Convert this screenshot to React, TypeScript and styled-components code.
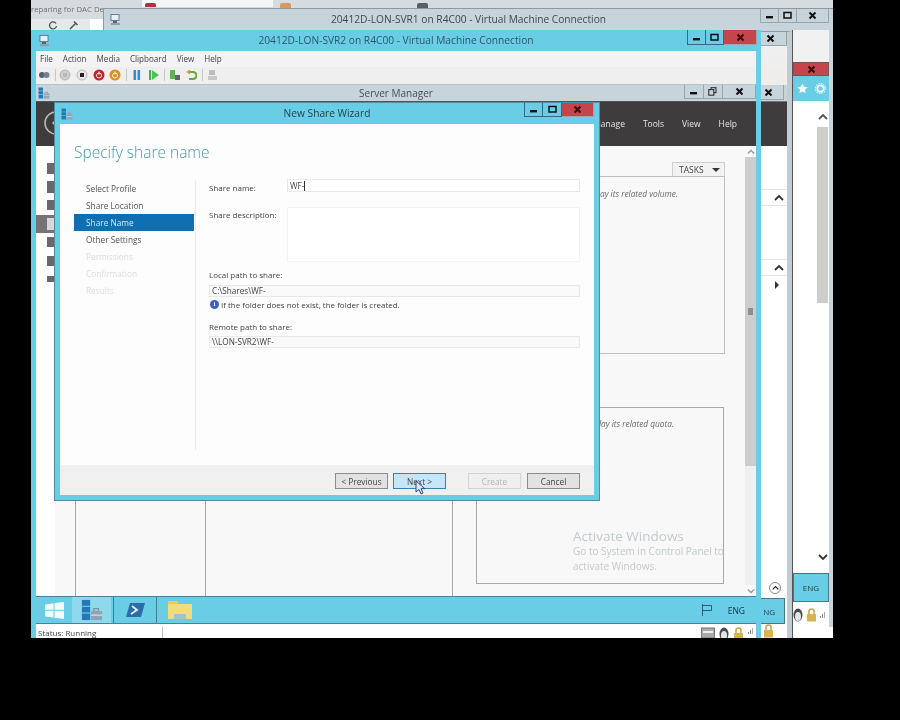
import React from 'react';
import styled, {createGlobalStyle} from 'styled-components';

const TEAL = '#69cde6';
const GREY = '#c8d4db';
const DARK = '#3e3c3c';
const UI_FONT = '"Open Sans", "Noto Sans", sans-serif';

const GlobalStyle = createGlobalStyle`
  html, body {
    margin: 0;
    background: #000;
  }
  body {
    font-family: ${UI_FONT};
    color: #333;
  }
`;

const Desktop = styled.div`
  position: relative;
  width: 900px;
  height: 720px;
  overflow: hidden;
  background: #000;
  filter: blur(0.35px);
`;

const Win = styled.div<{$x: number; $y: number; $w: number; $h: number}>`
  position: absolute;
  left: ${p => p.$x}px;
  top: ${p => p.$y}px;
  width: ${p => p.$w}px;
  height: ${p => p.$h}px;
  box-sizing: border-box;
  display: flex;
  flex-direction: column;
  overflow: hidden;
`;

/* browser behind everything */
const TabStrip = styled.div`
  display: flex;
  height: 19px;
  background: #d6dbdf;
  font-size: 7.8px;
`;
const Tab = styled.div<{$w: number; $active?: boolean; $pad?: number}>`
  width: ${p => p.$w}px;
  height: ${p => (p.$active ? 7 : 19)}px;
  overflow: hidden;
  white-space: nowrap;
  display: flex;
  align-items: flex-start;
  gap: 4px;
  padding-left: ${p => p.$pad ?? 0}px;
  box-sizing: border-box;
  background: ${p => (p.$active ? '#f4f5f6' : 'transparent')};
  color: #6c7276;
`;
const TabText = styled.span`
  line-height: 18px;
`;
const Favicon = styled.i<{$c: string}>`
  width: 11px;
  height: 7px;
  margin-top: 3px;
  flex: none;
  background: ${p => p.$c};
  border-radius: 2px;
`;
const BrowserBar = styled.div`
  display: flex;
  align-items: center;
  gap: 11px;
  height: 11px;
  padding-left: 17px;
  background: #e6e8ea;
  color: #555;
`;
const AddressBox = styled.div`
  width: 60px;
  height: 11px;
  background: #fff;
`;

/* title bars */
const TitleBar = styled.div<{$bg: string; $h: number; $pb?: number}>`
  position: relative;
  flex: none;
  height: ${p => p.$h}px;
  box-sizing: border-box;
  padding-bottom: ${p => p.$pb ?? 0}px;
  background: ${p => p.$bg};
  display: flex;
  align-items: center;
  justify-content: center;
`;
const TitleIcon = styled.span<{$left: number}>`
  position: absolute;
  left: ${p => p.$left}px;
  top: 50%;
  transform: translateY(-50%);
  display: flex;
`;
const TitleText = styled.span<{$c?: string; $size?: number}>`
  font-size: ${p => p.$size ?? 10.2}px;
  color: ${p => p.$c ?? '#3c4a52'};
  white-space: nowrap;
`;
const Caption = styled.div<{$right?: number}>`
  position: absolute;
  right: ${p => p.$right ?? 0}px;
  top: 0;
  display: flex;
`;
const CapBtn = styled.div<{$w: number; $h: number; $red?: boolean; $lit?: boolean}>`
  width: ${p => p.$w}px;
  height: ${p => p.$h}px;
  box-sizing: border-box;
  display: flex;
  align-items: center;
  justify-content: center;
  background: ${p => (p.$red ? '#c4454c' : p.$lit ? '#69cde6' : '#c8d4db')};
  border: 1px solid ${p => (p.$lit ? '#2f6c80' : '#99a4ab')};
  border-left-width: 0;
  border-top-width: 0;
  &:first-child {
    border-left-width: 1px;
  }
`;

const MinGlyph = () => <svg width="9" height="9" viewBox="0 0 9 9"><rect x="1" y="5" width="7" height="2.4" fill="#111"/></svg>;
const MaxGlyph = () => <svg width="9" height="9" viewBox="0 0 9 9"><rect x="1" y="1.5" width="7" height="5.5" fill="none" stroke="#111" strokeWidth="1.5"/></svg>;
const RestoreGlyph = () => (
    <svg width="9" height="9" viewBox="0 0 9 9">
        <rect x="3" y="0.7" width="5" height="5" fill="none" stroke="#222" strokeWidth="1"/>
        <rect x="0.8" y="2.6" width="5" height="5.6" fill={GREY} stroke="#222" strokeWidth="1"/>
    </svg>
);
const CloseGlyph = ({c = '#111'}: {c?: string}) => (
    <svg width="9" height="9" viewBox="0 0 9 9"><path d="M1.5 1.5 7.5 7.5M7.5 1.5 1.5 7.5" stroke={c} strokeWidth="2"/></svg>
);

const CaptionButtons = ({h, wMin, wClose, right, restore}: {h: number; wMin: number; wClose: number; right?: number; restore?: boolean}) => (
    <Caption $right={right}>
        <CapBtn $w={wMin} $h={h}><MinGlyph/></CapBtn>
        <CapBtn $w={wMin} $h={h}>{restore ? <RestoreGlyph/> : <MaxGlyph/>}</CapBtn>
        <CapBtn $w={wClose} $h={h}><CloseGlyph/></CapBtn>
    </Caption>
);

const VmIcon = () => (
    <svg width="11" height="12" viewBox="0 0 11 12">
        <rect x="1" y="0.5" width="8" height="6" fill="#e8eef2" stroke="#4a6a8a" strokeWidth="0.8"/>
        <rect x="3" y="7" width="4" height="2" fill="#567"/>
        <rect x="1" y="9" width="9" height="2" fill="#8ca0b0"/>
    </svg>
);
const ManagerIcon = ({size = 12}: {size?: number}) => (
    <svg width={size} height={size} viewBox="0 0 12 12">
        <rect x="0.5" y="0.5" width="4.5" height="3.2" fill="#2678b8"/>
        <rect x="0.5" y="4.2" width="4.5" height="3.2" fill="#2678b8"/>
        <rect x="0.5" y="7.9" width="4.5" height="3.6" fill="#2678b8"/>
        <path d="M7 6.5V5.2h2.500v1.300" fill="none" stroke="#7c8fa2" strokeWidth="0.7"/>
        <rect x="5.5" y="6.5" width="6" height="5" fill="#8fa3b5"/>
        <rect x="5.5" y="8.5" width="6" height="0.6" fill="#dde7ee"/>
    </svg>
);

/* far right VM window sliver */
const FarWindow = styled(Win)`
  background: linear-gradient(${GREY} 619px, #fff 619px);
`;
const FarTitle = styled(TitleBar)`
  border-top: 1px solid #8e989e;
  border-left: 1px solid #8e989e;
`;
const RightColumn = styled.div`
  flex: 1;
  margin-left: 689px;
  width: 36px;
  display: flex;
  flex-direction: column;
  background: #fff;
  border-left: 1px solid #555;
`;
const SliverTop = styled.div`
  height: 32px;
  background: #f2f1f1;
`;
const RedClose = styled.div`
  height: 14px;
  background: #c4454c;
  border: 1px solid #7a5458;
  box-sizing: border-box;
  display: flex;
  align-items: center;
  justify-content: center;
`;
const StarBand = styled.div`
  height: 25px;
  background: ${TEAL};
  display: flex;
  align-items: center;
  justify-content: center;
  gap: 7px;
`;
const SliverBody = styled.div`
  flex: 1;
  display: flex;
  flex-direction: column;
  align-items: flex-end;
  padding: 11px 1px 0 0;
`;
const ChevronBox = styled.div`
  width: 11px;
  height: 10px;
  display: flex;
  align-items: center;
  justify-content: center;
`;
const SliverTrack = styled.div`
  width: 11px;
  height: 176px;
  margin: 5px 0 249px;
  background: #cdcdca;
`;
const EngBox = styled.div`
  align-self: stretch;
  margin: 11px -1px 0 0;
  height: 29px;
  background: ${TEAL};
  border: 1px solid #46788a;
  box-sizing: border-box;
  font-size: 8px;
  display: flex;
  align-items: center;
  justify-content: center;
  color: #1b3c47;
`;
const TrayRow = styled.div`
  display: flex;
  align-items: center;
  gap: 3px;
  height: 25px;
  align-self: stretch;
`;

const Chevron = ({down, c = '#333', w = 10}: {down?: boolean; c?: string; w?: number}) => (
    <svg width={w} height="6" viewBox="0 0 10 6">
        <path d={down ? 'M1 1l4 4 4-4' : 'M1 5l4-4 4 4'} fill="none" stroke={c} strokeWidth="1.8"/>
    </svg>
);
const UserGlyph = () => (
    <svg width="10" height="14" viewBox="0 0 10 14">
        <ellipse cx="5" cy="7" rx="4.5" ry="6.5" fill="#4a4a50"/>
        <ellipse cx="5" cy="8.5" rx="3" ry="4.5" fill="#e6e6ea"/>
    </svg>
);
const LockGlyph = () => (
    <svg width="11" height="14" viewBox="0 0 11 14">
        <path d="M3 6V3.500a2.500 2.500 0 0 1 5 0V6" fill="none" stroke="#c9a646" strokeWidth="1.6"/>
        <rect x="1" y="6" width="9" height="7.5" fill="#d9b44e"/>
    </svg>
);
const SignalGlyph = () => (
    <svg width="5" height="7" viewBox="0 0 5 7">
        <rect x="0" y="5" width="1" height="2" fill="#888"/>
        <rect x="2" y="3" width="1" height="4" fill="#888"/>
        <rect x="4" y="1" width="1" height="6" fill="#aaa"/>
    </svg>
);

/* middle inactive VM window */
const BackVm = styled.div`
  flex: 1;
  display: flex;
  flex-direction: column;
  background: #fff;
  border-right: 5px solid #c2ccd3;
  border-top: 1px solid #8e989e;
`;
const BackVmTop = styled.div`
  height: 39px;
  flex: none;
  background: linear-gradient(#eff0f1, #f0ecea);
`;
const BackManagerBar = styled.div`
  position: relative;
  flex: none;
  height: 16px;
  background: ${GREY};
  border-bottom: 1px solid #6d757a;
`;
const BackDark = styled.div`
  flex: none;
  height: 44px;
  background: ${DARK};
`;
const BackBody = styled.div`
  flex: 1;
  display: flex;
  flex-direction: column;
  background: #fff;
  padding-top: 43px;
`;
const FoldRow = styled.div<{$gap: number; $pr?: number; $bare?: boolean}>`
  height: 17px;
  box-sizing: border-box;
  display: flex;
  justify-content: flex-end;
  align-items: center;
  padding-right: ${p => p.$pr ?? 3}px;
  border-top: 1px solid ${p => (p.$bare ? 'transparent' : '#e4e4e4')};
  border-bottom: 1px solid ${p => (p.$bare ? 'transparent' : '#e4e4e4')};
  margin-bottom: ${p => p.$gap}px;
`;
const BackEng = styled.div`
  flex: none;
  height: 26px;
  margin-right: 2px;
  background: ${TEAL};
  border: 1px solid #46788a;
  border-left-color: ${TEAL};
  box-sizing: border-box;
  font-size: 8px;
  display: flex;
  align-items: center;
  justify-content: flex-end;
  padding-right: 9px;
  color: #1b3c47;
  overflow: hidden;
`;
const BackStatus = styled.div`
  flex: none;
  height: 14px;
  display: flex;
  justify-content: flex-end;
  padding-right: 13px;
  overflow: hidden;
`;
const RoundUp = styled.div`
  align-self: flex-end;
  margin: auto 6px 4px 0;
  width: 12px;
  height: 12px;
  border-radius: 50%;
  border: 1px solid #888;
  box-sizing: border-box;
  display: flex;
  align-items: center;
  justify-content: center;
`;

/* front VM window */
const VmFrame = styled.div`
  flex: 1;
  display: flex;
  flex-direction: column;
  min-height: 0;
  background: ${TEAL};
  padding: 0 5px;
`;
const VmTitleWrap = styled.div`
  margin: 0 -5px;
`;
const MenuBar = styled.div`
  flex: none;
  height: 16px;
  box-sizing: border-box;
  padding: 0 0 2px 4px;
  background: #f4f3f4;
  display: flex;
  align-items: center;
  gap: 10px;
  font-size: 8.1px;
  color: #444;
`;
const ToolBar = styled.div`
  flex: none;
  height: 17px;
  box-sizing: border-box;
  padding: 0 0 2px 2px;
  background: #f0eff0;
  display: flex;
  align-items: center;
`;
const ToolIcon = styled.span<{$gap?: number}>`
  display: flex;
  margin-left: ${p => p.$gap ?? 4}px;
`;
const ToolSep = styled.i`
  width: 1px;
  height: 12px;
  margin-left: 5px;
  background: #c8c8c8;
`;
const ManagerWindow = styled.div`
  flex: 1;
  min-height: 0;
  display: flex;
  flex-direction: column;
`;
const ManagerBar = styled(TitleBar)`
  border-top: 1px solid #b8c3ca;
  border-bottom: 1px solid #4f5558;
`;
const DarkBand = styled.div`
  flex: none;
  height: 44px;
  box-sizing: border-box;
  padding: 0 19px 2px 0;
  background: ${DARK};
  display: flex;
  align-items: center;
  justify-content: flex-end;
  gap: 18px;
  font-size: 8.5px;
  color: #e6e6e6;
`;
const BackCircle = styled.div`
  position: absolute;
  left: 8px;
  top: 9px;
`;
const DarkWrap = styled.div`
  position: relative;
  flex: none;
`;
const ManagerBody = styled.div`
  flex: 1;
  min-height: 0;
  display: flex;
  background: #f8f8f8;
`;
const Sidebar = styled.div`
  width: 19px;
  flex: none;
  background: #fff;
  padding-top: 13px;
  box-sizing: border-box;
`;
const SideRow = styled.div<{$on?: boolean}>`
  height: 18.5px;
  display: flex;
  align-items: center;
  padding-left: 11px;
  background: ${p => (p.$on ? '#757575' : 'transparent')};
`;
const SideGlyph = styled.i<{$on?: boolean; $h: number}>`
  width: 8px;
  height: ${p => p.$h}px;
  background: ${p => (p.$on ? '#d8d8d8' : '#6a686b')};
`;
const MainPane = styled.div`
  position: relative;
  flex: 1;
  min-width: 0;
  display: flex;
`;
const MainContent = styled.div`
  flex: 1;
  padding: 16px 20px 0 20px;
  display: flex;
  flex-direction: column;
  min-width: 0;
`;
const TasksButton = styled.div`
  align-self: flex-end;
  width: 53px;
  height: 14px;
  flex: none;
  box-sizing: border-box;
  border: 1px solid #cfcfcf;
  border-bottom: 0;
  background: #f2f2f2;
  display: flex;
  align-items: center;
  justify-content: space-between;
  padding: 0 4px 0 6px;
  font-size: 8.5px;
  color: #444;
`;
const TasksCaret = styled.i`
  width: 0;
  height: 0;
  border-left: 4px solid transparent;
  border-right: 4px solid transparent;
  border-top: 4px solid #333;
`;
const TopCard = styled.div`
  flex: none;
  height: 178px;
  border: 1px solid #bdbdbd;
  box-sizing: border-box;
  display: flex;
  justify-content: flex-end;
  padding: 11px 46px 0 0;
`;
const HintText = styled.span`
  font-size: 8.3px;
  font-style: italic;
  color: #6a6a6a;
`;
const BottomRow = styled.div`
  flex: 1;
  margin-top: 53px;
  min-height: 0;
  display: grid;
  grid-template-columns: 130px 248px 248px;
  column-gap: 0;
`;
const ColumnLine = styled.div<{$end?: boolean}>`
  border-left: 1px solid #a8a8a8;
  border-right: ${p => (p.$end ? '1px solid #a8a8a8' : '0')};
  margin-top: -40px;
`;
const QuotaCard = styled.div`
  margin: 0 0 12px 23px;
  width: 248px;
  border: 1px solid #a8a8a8;
  box-sizing: border-box;
  display: flex;
  justify-content: flex-end;
  padding: 10px 49px 0 0;
`;
const ScrollBar = styled.div`
  width: 11px;
  flex: none;
  display: flex;
  flex-direction: column;
  background: #f0f0f0;
  position: relative;
`;
const ScrollCap = styled.div`
  height: 11px;
  flex: none;
  background: #fafafa;
  display: flex;
  align-items: center;
  justify-content: center;
`;
const ScrollTrack = styled.div`
  flex: none;
  height: 309px;
  background: #cdcdcb;
  display: flex;
  justify-content: center;
  padding-top: 151px;
  box-sizing: border-box;
`;
const ScrollGrip = styled.i`
  width: 5px;
  height: 7px;
  background: #8e8e8e;
`;
const ScrollEnd = styled(ScrollCap)`
  margin-top: auto;
`;
const Activate = styled.div`
  position: absolute;
  left: 518px;
  top: 382px;
  color: #c4cace;
  font-size: 10px;
  line-height: 15px;
  width: 158px;
  z-index: 1;
`;
const ActivateTitle = styled.div`
  font-size: 13.5px;
  line-height: 16px;
`;
const TaskBar = styled.div`
  flex: none;
  height: 28px;
  box-sizing: border-box;
  background: ${TEAL};
  border-top: 1px solid #49829a;
  border-bottom: 1px solid #49829a;
  display: flex;
  align-items: stretch;
`;
const TaskTile = styled.div<{$w: number; $on?: boolean; $sep?: boolean}>`
  width: ${p => p.$w}px;
  flex: none;
  display: flex;
  align-items: center;
  justify-content: center;
  background: ${p => (p.$on ? '#8fd9ec' : 'transparent')};
  border-right: ${p => (p.$sep ? '1px solid #3e7f93' : '0')};
  box-sizing: border-box;
`;
const TaskGap = styled.div`
  flex: 1;
`;
const TaskTray = styled.div`
  display: flex;
  align-items: center;
  gap: 15px;
  padding-right: 11px;
  font-size: 8.5px;
  color: #17323c;
`;
const StatusBar = styled.div`
  flex: none;
  height: 14px;
  background: #fff;
  display: flex;
  align-items: center;
  font-size: 8px;
  color: #444;
  padding: 3px 0 0 2px;
  box-sizing: border-box;
`;
const StatusLabel = styled.div`
  width: 124px;
  border-right: 1px solid #bbb;
  line-height: 11px;
  margin-right: auto;
`;
const StatusIcons = styled.div`
  display: flex;
  align-items: flex-start;
  gap: 4px;
  height: 11px;
  padding-right: 3px;
  overflow: hidden;
`;

/* the wizard */
const WizardFrame = styled.div`
  flex: 1;
  min-height: 0;
  display: flex;
  flex-direction: column;
  background: #fdfdfd;
  margin: 0 5px 5px;
`;
const WizardShell = styled(Win)`
  background: ${TEAL};
  box-shadow: 0 0 0 1px #4f8ea2;
`;
const WizardHeading = styled.h1`
  margin: 0;
  padding: 18px 0 0 14px;
  height: 56px;
  box-sizing: border-box;
  flex: none;
  font-size: 15.5px;
  font-weight: 300;
  line-height: 20px;
  color: #4a9aad;
`;
const WizardBody = styled.div`
  flex: 1;
  min-height: 0;
  display: flex;
  padding-left: 14px;
`;
const StepList = styled.ul`
  list-style: none;
  margin: 0;
  padding: 0;
  width: 120px;
  flex: none;
`;
const Step = styled.li<{$on?: boolean; $off?: boolean}>`
  height: 17px;
  line-height: 17px;
  padding-left: 12px;
  font-size: 8.3px;
  background: ${p => (p.$on ? '#0f6fb1' : 'transparent')};
  color: ${p => (p.$on ? '#d7e9f5' : p.$off ? '#dcdcdc' : '#555')};
`;
const FormColumn = styled.div`
  margin-left: 1px;
  flex: 1;
  border-left: 1px solid #ececec;
  padding: 0 14px 0 13px;
  margin-bottom: 15px;
`;
const FieldRow = styled.div<{$gap: number; $top?: number}>`
  display: flex;
  margin-top: ${p => p.$top ?? 0}px;
  margin-bottom: ${p => p.$gap}px;
`;
const FieldLabel = styled.label<{$w?: number; $pad?: number; $after?: number}>`
  display: block;
  width: ${p => (p.$w ? `${p.$w}px` : 'auto')};
  flex: none;
  padding-top: ${p => p.$pad ?? 0}px;
  margin-bottom: ${p => p.$after ?? 0}px;
  font-size: 8px;
  line-height: 12px;
  color: #444;
`;
const TextField = styled.div<{$h: number; $ro?: boolean; $faint?: boolean}>`
  flex: 1;
  height: ${p => p.$h}px;
  box-sizing: border-box;
  border: 1px solid ${p => (p.$faint ? '#f3f3f3' : '#e8e8e8')};
  background: ${p => (p.$ro ? '#f9f9f9' : '#fff')};
  font-size: 8.2px;
  line-height: ${p => p.$h - 2}px;
  padding-left: 2px;
  color: #444;
  white-space: nowrap;
`;
const Caret = styled.i`
  display: inline-block;
  width: 1px;
  height: 10px;
  vertical-align: -2px;
  background: #333;
`;
const InfoRow = styled.div`
  display: flex;
  align-items: center;
  gap: 2px;
  height: 13px;
  padding-left: 1px;
  margin: 1px 0 10px;
  font-size: 8px;
  color: #444;
`;
const InfoDot = styled.span`
  width: 9px;
  height: 9px;
  border-radius: 50%;
  background: #3a62b8;
  color: #fff;
  font-size: 7px;
  line-height: 9px;
  text-align: center;
  font-family: "Liberation Serif", serif;
  font-weight: bold;
`;
const WizardFooter = styled.div`
  flex: none;
  height: 30px;
  background: #f0f0f0;
  display: flex;
  align-items: center;
  justify-content: flex-end;
  padding: 2px 14px 0 0;
  box-sizing: border-box;
`;
const WizardButton = styled.div<{$on?: boolean; $off?: boolean; $gap?: number}>`
  width: 53px;
  height: 16px;
  box-sizing: border-box;
  margin-left: ${p => p.$gap ?? 0}px;
  display: flex;
  align-items: center;
  justify-content: center;
  font-size: 8.3px;
  color: ${p => (p.$off ? '#b5b5b5' : '#444')};
  background: ${p => (p.$on ? '#c6e5f7' : p.$off ? '#efefef' : '#e2e2e2')};
  border: 1px solid ${p => (p.$on ? '#3d80b2' : p.$off ? '#d4d4d4' : '#8c8c8c')};
`;
const Pointer = styled.svg`
  position: absolute;
  left: 415px;
  top: 480px;
`;

const PowerIcon = ({c}: {c: string}) => (
    <svg width="12" height="12" viewBox="0 0 12 12">
        <circle cx="6" cy="6" r="5.5" fill={c}/>
        <circle cx="6" cy="6.5" r="2.5" fill="none" stroke="#fff" strokeWidth="0.9"/>
        <path d="M6 2.500v3" stroke="#fff" strokeWidth="0.9"/>
    </svg>
);
const RoundIcon = ({dot, c}: {dot: string; c: string}) => (
    <svg width="12" height="12" viewBox="0 0 12 12">
        <circle cx="6" cy="6" r="5" fill={c} stroke="#aaa" strokeWidth="0.8"/>
        <rect x="4" y="4" width="4" height="4" fill={dot}/>
    </svg>
);

const steps = [
    {name: 'Select Profile'},
    {name: 'Share Location'},
    {name: 'Share Name', on: true},
    {name: 'Other Settings'},
    {name: 'Permissions', off: true},
    {name: 'Confirmation', off: true},
    {name: 'Results', off: true},
];

const menuItems = ['File', 'Action', 'Media', 'Clipboard', 'View', 'Help'];
const sideRows = [
    {h: 11}, {h: 12}, {h: 10}, {h: 12, on: true}, {h: 10}, {h: 10}, {h: 6},
];

export default function App() {
    return (
        <>
            <GlobalStyle/>
            <Desktop>
                <Win $x={31} $y={0} $w={802} $h={40}>
                    <TabStrip>
                        <Tab $w={75}><TabText>reparing for DAC De</TabText></Tab>
                        <Tab $w={36}/>
                        <Tab $w={131} $pad={3} $active><Favicon $c="#a8343c"/><TabText>Preparing for DAC</TabText></Tab>
                        <Tab $w={144} $pad={7}><Favicon $c="#d89a5c"/></Tab>
                        <Tab $w={100}><Favicon $c="#5a5f63"/></Tab>
                    </TabStrip>
                    <BrowserBar>
                        <svg width="10" height="10" viewBox="0 0 10 10"><path d="M8 3.500A3.500 3.500 0 1 0 8.500 6" fill="none" stroke="#555" strokeWidth="1.3"/></svg>
                        <svg width="10" height="10" viewBox="0 0 10 10"><path d="M1 9 7 3M5 1.500l3.500 3.500" fill="none" stroke="#555" strokeWidth="1.5"/></svg>
                        <AddressBox/>
                    </BrowserBar>
                </Win>

                <FarWindow $x={103} $y={8} $w={730} $h={630}>
                    <FarTitle $bg={GREY} $h={22} $pb={2}>
                        <TitleIcon $left={6}><VmIcon/></TitleIcon>
                        <TitleText>20412D-LON-SVR1 on R4C00 - Virtual Machine Connection</TitleText>
                        <CaptionButtons h={14} wMin={18.5} wClose={32} right={4}/>
                    </FarTitle>
                    <RightColumn>
                        <SliverTop/>
                        <RedClose><CloseGlyph c="#3a0d10"/></RedClose>
                        <StarBand>
                            <svg width="11" height="11" viewBox="0 0 12 12"><path d="M6 .5l1.700 3.700 4 .4-3 2.700.9 4-3.600-2.100-3.600 2.100.9-4-3-2.700 4-.4z" fill="#f4fafc"/></svg>
                            <svg width="11" height="11" viewBox="0 0 12 12"><circle cx="6" cy="6" r="3.5" fill="none" stroke="#eef8fb" strokeWidth="2"/><circle cx="6" cy="6" r="5.4" fill="none" stroke="#eef8fb" strokeWidth="1.2" strokeDasharray="1.6 1.2"/></svg>
                        </StarBand>
                        <SliverBody>
                            <ChevronBox><Chevron c="#555"/></ChevronBox>
                            <SliverTrack/>
                            <ChevronBox><Chevron down/></ChevronBox>
                            <EngBox>ENG</EngBox>
                            <TrayRow><UserGlyph/><LockGlyph/><SignalGlyph/></TrayRow>
                        </SliverBody>
                    </RightColumn>
                </FarWindow>

                <Win $x={640} $y={31} $w={152} $h={607}>
                    <BackVm>
                        <TitleBar $bg="#c8d4db" $h={14}>
                            <Caption><CapBtn $w={34} $h={14}><CloseGlyph/></CapBtn></Caption>
                        </TitleBar>
                        <BackVmTop/>
                        <BackManagerBar>
                            <Caption $right={3}><CapBtn $w={32} $h={15}><CloseGlyph/></CapBtn></Caption>
                        </BackManagerBar>
                        <BackDark/>
                        <BackBody>
                            <FoldRow $gap={53}><Chevron/></FoldRow>
                            <FoldRow $gap={0}><Chevron/></FoldRow>
                            <FoldRow $gap={0} $pr={7} $bare><svg width="6" height="8" viewBox="0 0 6 8"><path d="M1 0l4 4-4 4z" fill="#333"/></svg></FoldRow>
                            <RoundUp><Chevron w={7} c="#222"/></RoundUp>
                            <BackEng>NG</BackEng>
                            <BackStatus><LockGlyph/></BackStatus>
                        </BackBody>
                    </BackVm>
                </Win>

                <Win $x={31} $y={30} $w={730} $h={608}>
                    <VmFrame>
                        <VmTitleWrap>
                            <TitleBar $bg={TEAL} $h={21} $pb={2}>
                                <TitleIcon $left={8}><VmIcon/></TitleIcon>
                                <TitleText $c="#2c5a68">20412D-LON-SVR2 on R4C00 - Virtual Machine Connection</TitleText>
                                <Caption $right={4}>
                                    <CapBtn $w={19} $h={15} $lit><MinGlyph/></CapBtn>
                                    <CapBtn $w={18} $h={15} $lit><MaxGlyph/></CapBtn>
                                    <CapBtn $w={33} $h={15} $red><CloseGlyph c="#3a0d10"/></CapBtn>
                                </Caption>
                            </TitleBar>
                        </VmTitleWrap>
                        <MenuBar>
                            {menuItems.map(item => <span key={item}>{item}</span>)}
                        </MenuBar>
                        <ToolBar>
                            <ToolIcon $gap={0}>
                                <svg width="12" height="12" viewBox="0 0 12 12"><circle cx="4" cy="6" r="3" fill="#50606e"/><circle cx="8.5" cy="6" r="3" fill="#74828e"/></svg>
                            </ToolIcon>
                            <ToolSep/>
                            <ToolIcon $gap={3}><RoundIcon c="#cfcfcf" dot="#b8b8b8"/></ToolIcon>
                            <ToolIcon $gap={5}><RoundIcon c="#e8e8e8" dot="#222"/></ToolIcon>
                            <ToolIcon $gap={5}><PowerIcon c="#c0272d"/></ToolIcon>
                            <ToolIcon $gap={4}><PowerIcon c="#d8901c"/></ToolIcon>
                            <ToolSep/>
                            <ToolIcon $gap={6}>
                                <svg width="8" height="12" viewBox="0 0 8 12"><rect x="0.5" y="1" width="2.6" height="10" fill="#2f8fd8"/><rect x="4.5" y="1" width="2.6" height="10" fill="#2f8fd8"/></svg>
                            </ToolIcon>
                            <ToolIcon $gap={8}>
                                <svg width="10" height="12" viewBox="0 0 10 12"><rect width="2" height="10" y="1" fill="#3eb54a"/><path d="M3 1l7 5-7 5z" fill="#4cc455"/></svg>
                            </ToolIcon>
                            <ToolSep/>
                            <ToolIcon $gap={4}>
                                <svg width="12" height="12" viewBox="0 0 12 12"><rect x="1" y="1" width="5" height="9" fill="#63b254"/><rect x="6" y="6" width="5" height="5" fill="#666"/></svg>
                            </ToolIcon>
                            <ToolIcon $gap={4}>
                                <svg width="12" height="12" viewBox="0 0 12 12"><path d="M3 3h5a3 3 0 0 1 0 7H4" fill="none" stroke="#6aa63c" strokeWidth="2"/><path d="M1 3l4-2.500v5z" fill="#d0a030"/></svg>
                            </ToolIcon>
                            <ToolSep/>
                            <ToolIcon $gap={4}>
                                <svg width="11" height="12" viewBox="0 0 11 12"><rect x="2" y="1" width="6" height="5" fill="#bcbcbc"/><rect x="1" y="7" width="9" height="4" fill="#c8c8c8"/></svg>
                            </ToolIcon>
                        </ToolBar>
                        <ManagerWindow>
                            <ManagerBar $bg={GREY} $h={18}>
                                <TitleIcon $left={2}><ManagerIcon/></TitleIcon>
                                <TitleText $c="#4a4f52" $size={10}>Server Manager</TitleText>
                                <CaptionButtons h={14} wMin={19.5} wClose={33} restore/>
                            </ManagerBar>
                            <DarkWrap>
                                <DarkBand>
                                    <span>Manage</span><span>Tools</span><span>View</span><span>Help</span>
                                </DarkBand>
                                <BackCircle>
                                    <svg width="24" height="24" viewBox="0 0 24 24"><circle cx="12" cy="12" r="11" fill="none" stroke="#bdb8b2" strokeWidth="1.5"/><path d="M14 6l-6 6 6 6z" fill="#bdb8b2"/></svg>
                                </BackCircle>
                            </DarkWrap>
                            <ManagerBody>
                                <Sidebar>
                                    {sideRows.map((row, i) => (
                                        <SideRow key={i} $on={row.on}><SideGlyph $on={row.on} $h={row.h}/></SideRow>
                                    ))}
                                </Sidebar>
                                <MainPane>
                                    <MainContent>
                                        <TasksButton>TASKS<TasksCaret/></TasksButton>
                                        <TopCard><HintText>lay its related volume.</HintText></TopCard>
                                        <BottomRow>
                                            <ColumnLine/>
                                            <ColumnLine $end/>
                                            <QuotaCard><HintText>lay its related quota.</HintText></QuotaCard>
                                        </BottomRow>
                                    </MainContent>
                                    <ScrollBar>
                                        <ScrollCap><Chevron w={8} c="#999"/></ScrollCap>
                                        <ScrollTrack><ScrollGrip/></ScrollTrack>
                                        <ScrollEnd><Chevron w={8} down c="#999"/></ScrollEnd>
                                    </ScrollBar>
                                    <Activate>
                                        <ActivateTitle>Activate Windows</ActivateTitle>
                                        Go to System in Control Panel to activate Windows.
                                    </Activate>
                                </MainPane>
                            </ManagerBody>
                            <TaskBar>
                                <TaskTile $w={36}>
                                    <svg width="19" height="17" viewBox="0 0 19 17"><path d="M0 2.500 8.500 1.200v6.600H0zM9.500 1 19 0v7.800H9.500zM0 8.800h8.500v6.800L0 14.500zM9.500 8.800H19V17l-9.500-1.300z" fill="#f2fafc"/></svg>
                                </TaskTile>
                                <TaskTile $w={39} $on>
                                    <ManagerIcon size={22}/>
                                </TaskTile>
                                <TaskTile $w={3} $sep/>
                                <TaskTile $w={43} $sep>
                                    <svg width="19" height="16" viewBox="0 0 19 16"><path d="M4 1h15l-4 14H0z" fill="#2a6ea8"/><path d="M6 4l5 4-6 4" fill="none" stroke="#e8f2f8" strokeWidth="1.8"/></svg>
                                </TaskTile>
                                <TaskTile $w={46}>
                                    <svg width="24" height="20" viewBox="0 0 24 20"><rect y="1" width="10" height="4" fill="#e8cc60"/><rect y="4" width="24" height="15" fill="#f3dc7e"/><rect x="6" y="14" width="12" height="5" fill="#9cc4d4"/></svg>
                                </TaskTile>
                                <TaskGap/>
                                <TaskTray>
                                    <svg width="12" height="12" viewBox="0 0 12 12"><path d="M1.500 0v12M1.500 1.500h9v5h-9" fill="none" stroke="#2b5f78" strokeWidth="1"/></svg>
                                    <span>ENG</span>
                                </TaskTray>
                            </TaskBar>
                            <StatusBar>
                                <StatusLabel>Status: Running</StatusLabel>
                                <StatusIcons>
                                    <svg width="14" height="12" viewBox="0 0 14 12"><rect x="0.5" y="1" width="13" height="10" fill="#aaa" stroke="#777"/><rect x="2" y="4" width="10" height="2" fill="#eee"/></svg>
                                    <UserGlyph/>
                                    <LockGlyph/>
                                    <SignalGlyph/>
                                </StatusIcons>
                            </StatusBar>
                        </ManagerWindow>
                    </VmFrame>
                </Win>

                <WizardShell $x={55} $y={103} $w={544} $h={397}>
                    <TitleBar $bg={TEAL} $h={21} $pb={2}>
                        <TitleIcon $left={6}><ManagerIcon/></TitleIcon>
                        <TitleText $c="#27424c">New Share Wizard</TitleText>
                        <Caption $right={5}>
                            <CapBtn $w={19} $h={14} $lit><MinGlyph/></CapBtn>
                            <CapBtn $w={19} $h={14} $lit><MaxGlyph/></CapBtn>
                            <CapBtn $w={32} $h={14} $red><CloseGlyph c="#3a0d10"/></CapBtn>
                        </Caption>
                    </TitleBar>
                    <WizardFrame>
                        <WizardHeading>Specify share name</WizardHeading>
                        <WizardBody>
                            <StepList>
                                {steps.map(step => (
                                    <Step key={step.name} $on={step.on} $off={step.off}>{step.name}</Step>
                                ))}
                            </StepList>
                            <FormColumn>
                                <FieldRow $top={-1} $gap={13}>
                                    <FieldLabel $w={78} $pad={3}>Share name:</FieldLabel>
                                    <TextField $h={13}>WF-<Caret/></TextField>
                                </FieldRow>
                                <FieldRow $gap={7}>
                                    <FieldLabel $w={78} $pad={2}>Share description:</FieldLabel>
                                    <TextField $h={55} $faint/>
                                </FieldRow>
                                <FieldLabel $after={4}>Local path to share:</FieldLabel>
                                <TextField $h={12} $ro>C:\Shares\WF-</TextField>
                                <InfoRow><InfoDot>i</InfoDot>If the folder does not exist, the folder is created.</InfoRow>
                                <FieldLabel $after={3}>Remote path to share:</FieldLabel>
                                <TextField $h={12} $ro>\\LON-SVR2\WF-</TextField>
                            </FormColumn>
                        </WizardBody>
                        <WizardFooter>
                            <WizardButton>&lt; Previous</WizardButton>
                            <WizardButton $on $gap={5}>Next &gt;</WizardButton>
                            <WizardButton $off $gap={22}>Create</WizardButton>
                            <WizardButton $gap={6}>Cancel</WizardButton>
                        </WizardFooter>
                    </WizardFrame>
                </WizardShell>

                <Pointer width="11" height="15" viewBox="0 0 11 15">
                    <path d="M1 1v11l3-2.500 2 4.500 2-1-2-4.300h3.800z" fill="#dfe8f2" stroke="#2b4a80" strokeWidth="1"/>
                </Pointer>
            </Desktop>
        </>
    );
}
